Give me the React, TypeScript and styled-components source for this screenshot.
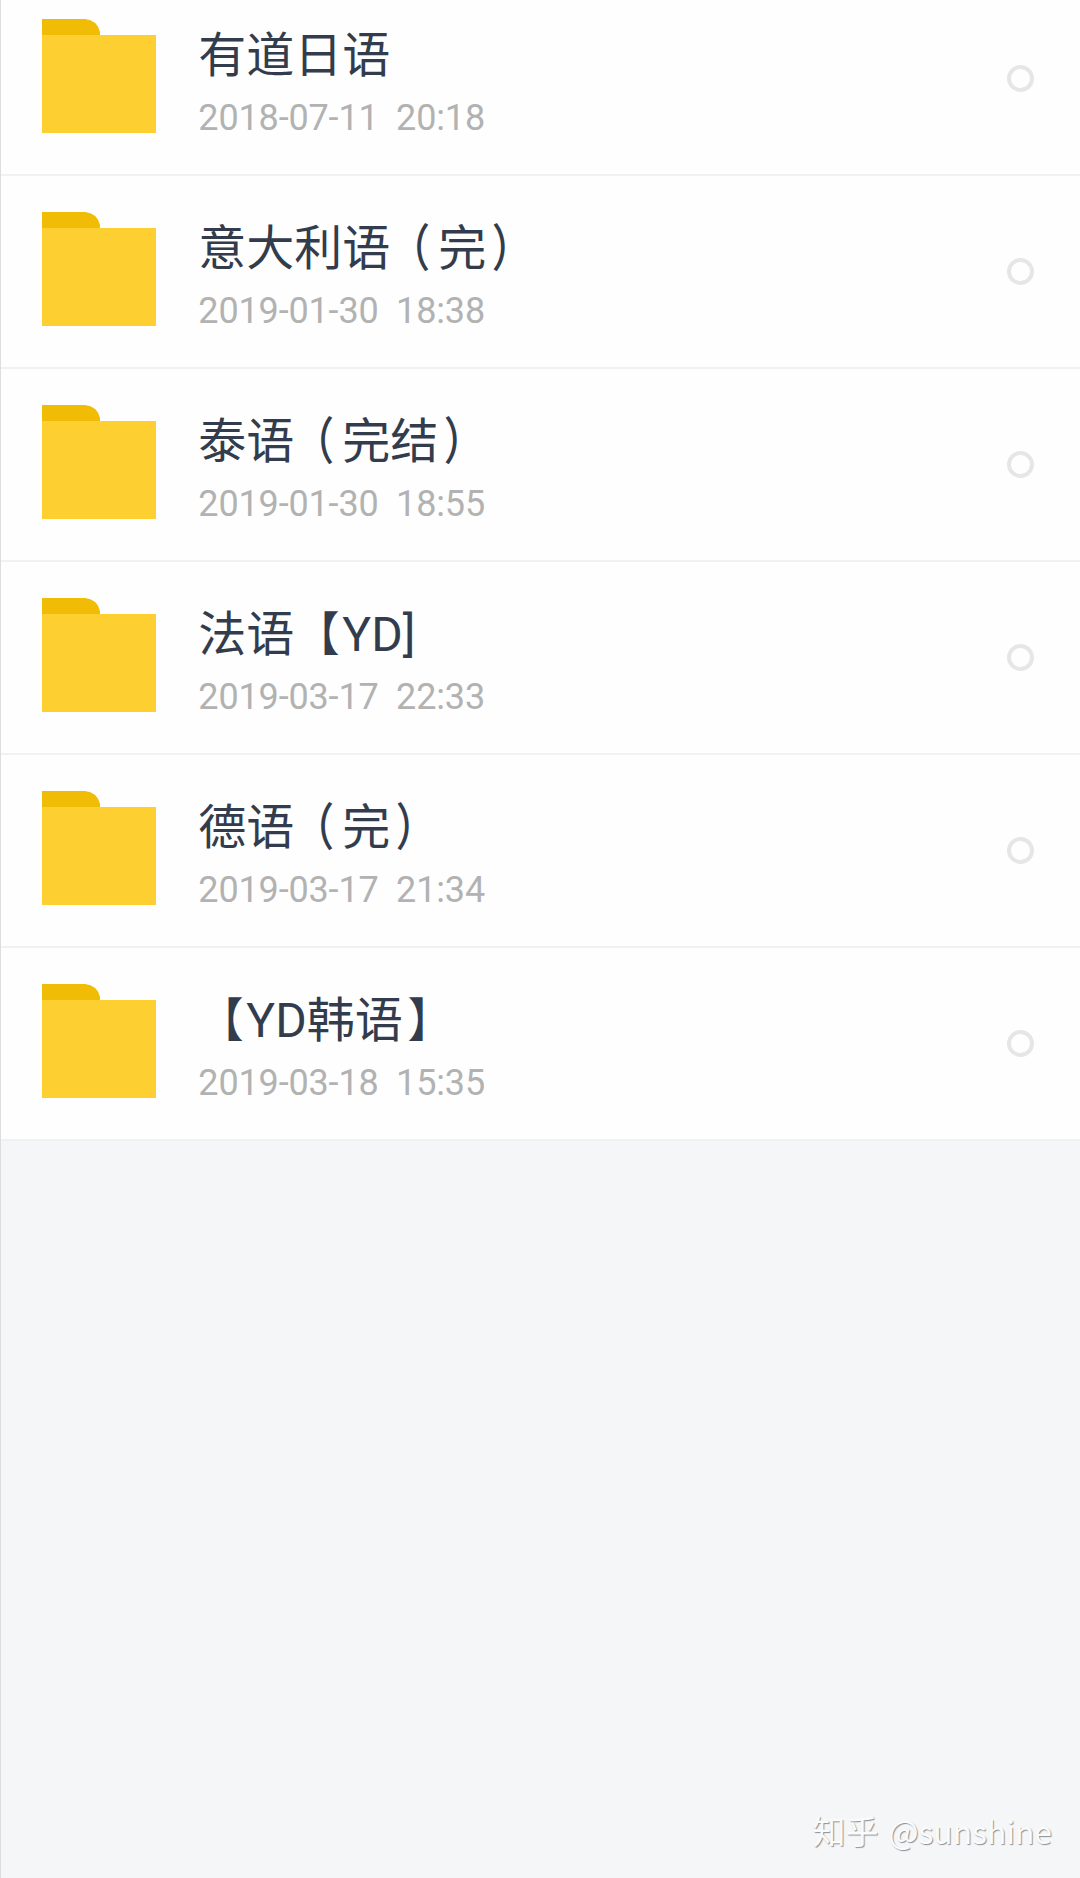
import React from 'react';
import styled, { createGlobalStyle } from 'styled-components';

const GlobalStyle = createGlobalStyle`
  body {
    margin: 0;
    background: #f4f6f8;
  }
  *, *::before, *::after {
    box-sizing: border-box;
  }
`;

const Page = styled.main`
  position: relative;
  height: 1878px;
  overflow: hidden;
  border-left: 1px solid #dcdddf;
  background: #f4f6f8;
  font-family: Roboto, 'Noto Sans CJK SC', sans-serif;
`;

const FolderList = styled.ul`
  margin: -17px 0 0;
  padding: 0;
  list-style: none;
`;

const Row = styled.li`
  display: flex;
  align-items: flex-start;
  height: 193px;
  padding: 36px 46px 0 41px;
  background: #fefefe;
  border-bottom: 2px solid #f0f1f1;
`;

const FolderIcon = styled.svg`
  flex: none;
  width: 114px;
  height: 114px;
`;

const Info = styled.div`
  flex: 1;
  margin-left: 42.3px;
  padding-top: 5px;
`;

const Name = styled.div`
  height: 64px;
  line-height: 64px;
  font-size: 48px;
  color: #323c4d;
  white-space: nowrap;
`;

/* Full-width brackets sit closer to the middle of their em box. */
const Bracket = styled.span<{ $shift: number; $sx: number; $sy: number }>`
  display: inline-block;
  line-height: 1;
  font-weight: ${(p) => (p.$sy > 1 ? 500 : 400)};
  transform: translateX(${(p) => p.$shift}px) scale(${(p) => p.$sx}, ${(p) => p.$sy});
`;

const Modified = styled.div`
  height: 42px;
  margin-top: 8.5px;
  line-height: 42px;
  font-size: 36px;
  color: #b2b2b2;
  letter-spacing: -0.15px;
  white-space: pre;
`;

const Radio = styled.span`
  flex: none;
  width: 27px;
  height: 27px;
  margin: 46.4px 0 0;
  border: 4px solid #e6e6e6;
  border-radius: 50%;
`;

const Watermark = styled.div`
  position: absolute;
  right: 28px;
  bottom: 25px;
  display: flex;
  align-items: baseline;
  gap: 10px;
  line-height: 46px;
  font-family: 'Noto Sans CJK SC', sans-serif;
  font-size: 33px;
  color: #fafbfc;
  text-shadow: 1px 1px 1px #8e9092;
  white-space: nowrap;
`;

const Handle = styled.span`
  font-size: 31.8px;
`;

const brackets: Record<string, { shift: number; sx: number; sy: number }> = {
  '（': { shift: -4, sx: 0.84, sy: 1.05 },
  '）': { shift: 2, sx: 0.84, sy: 1.05 },
  '【': { shift: -1, sx: 0.94, sy: 0.98 },
  '】': { shift: 3, sx: 0.94, sy: 0.98 },
};

function FolderName({ text }: { text: string }) {
  return (
    <Name>
      {text.split(/([（）【】])/).map((part, i) => {
        const b = brackets[part];
        return b ? (
          <Bracket key={i} $shift={b.shift} $sx={b.sx} $sy={b.sy}>
            {part}
          </Bracket>
        ) : (
          part
        );
      })}
    </Name>
  );
}

const folders = [
  { name: '有道日语', modified: '2018-07-11  20:18' },
  { name: '意大利语（完）', modified: '2019-01-30  18:38' },
  { name: '泰语（完结）', modified: '2019-01-30  18:55' },
  { name: '法语【YD]', modified: '2019-03-17  22:33' },
  { name: '德语（完）', modified: '2019-03-17  21:34' },
  { name: '【YD韩语】', modified: '2019-03-18  15:35' },
];

export default function App() {
  return (
    <>
      <GlobalStyle />
      <Page lang="zh-CN">
        <FolderList>
          {folders.map((folder) => (
            <Row key={folder.name}>
              <FolderIcon viewBox="0 0 114 114" aria-hidden="true">
                <path d="M0 0H43Q55 1 58 13V18H0Z" fill="#f0bc05" />
                <path d="M0 16H114V114H0Z" fill="#fdcf30" />
              </FolderIcon>
              <Info>
                <FolderName text={folder.name} />
                <Modified>{folder.modified}</Modified>
              </Info>
              <Radio />
            </Row>
          ))}
        </FolderList>
        <Watermark>
          知乎 <Handle>@sunshine</Handle>
        </Watermark>
      </Page>
    </>
  );
}
